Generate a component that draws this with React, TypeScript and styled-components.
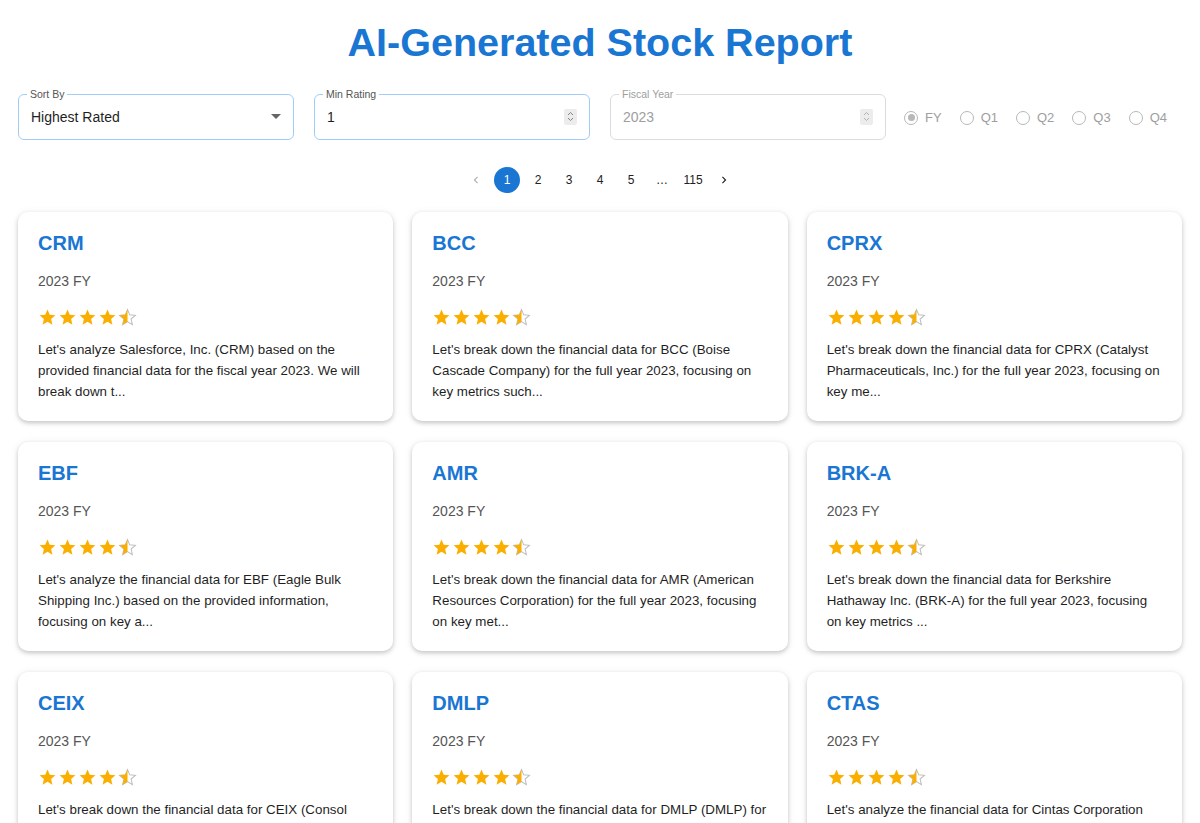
import React from 'react'
import styled, { createGlobalStyle } from 'styled-components'

const GlobalStyle = createGlobalStyle`
    body {
        margin: 0;
        background: #fff;
        font-family: 'Liberation Sans', Arial, sans-serif;
        color: #1f1f1f;
    }
`

const Page = styled.div`
    padding: 20px 18px 40px;
`

const Title = styled.h1`
    margin: 0 0 31px;
    text-align: center;
    font-size: 39.5px;
    line-height: 44px;
    font-weight: 700;
    color: #1976d2;
`

const Controls = styled.div`
    display: flex;
    align-items: center;
    gap: 20px;
`

const Field = styled.fieldset<{ disabled?: boolean }>`
    position: relative;
    box-sizing: border-box;
    width: 276px;
    height: 51px;
    margin: -6px 0 0;
    padding: 0 12px;
    border: 1px solid ${p => (p.disabled ? '#dcdcdc' : '#9fcdf5')};
    border-radius: 6px;
    display: flex;
    align-items: center;
    justify-content: space-between;
    font-size: 14px;
    color: ${p => (p.disabled ? '#9e9e9e' : '#1f1f1f')};
`

const Legend = styled.legend<{ disabled?: boolean }>`
    padding: 0 3px;
    margin-left: -4px;
    font-size: 10.5px;
    line-height: 11px;
    color: ${p => (p.disabled ? '#9e9e9e' : '#555')};
`

const FieldValue = styled.span`
    margin-top: -6px;
`

const Caret = styled.span`
    margin-top: -6px;
    width: 0;
    height: 0;
    border-left: 5px solid transparent;
    border-right: 5px solid transparent;
    border-top: 5px solid #666;
`

const Spinner = styled.span`
    margin-top: -6px;
    width: 13px;
    height: 16px;
    background: #ececec;
    border-radius: 2px;
    display: flex;
    align-items: center;
    justify-content: center;
`

const Radios = styled.div`
    display: flex;
    align-items: center;
    gap: 18px;
    margin-left: -2px;
    font-size: 13px;
    color: #9e9e9e;
`

const RadioItem = styled.label`
    display: flex;
    align-items: center;
    gap: 7px;
`

const RadioDot = styled.span<{ checked?: boolean }>`
    box-sizing: border-box;
    width: 14px;
    height: 14px;
    border-radius: 50%;
    border: 1px solid #b8b8b8;
    display: flex;
    align-items: center;
    justify-content: center;

    &::after {
        content: '';
        width: 7px;
        height: 7px;
        border-radius: 50%;
        background: ${p => (p.checked ? '#b8b8b8' : 'transparent')};
    }
`

const Pager = styled.nav`
    margin: 27px 0 19px;
    display: flex;
    justify-content: center;
    align-items: center;
    gap: 5px;
    font-size: 12px;
    color: #222;
`

const PageBtn = styled.span<{ active?: boolean; muted?: boolean }>`
    min-width: 26px;
    height: 26px;
    border-radius: 13px;
    display: flex;
    align-items: center;
    justify-content: center;
    background: ${p => (p.active ? '#1976d2' : 'transparent')};
    color: ${p => (p.active ? '#fff' : p.muted ? '#b0b0b0' : '#222')};
`

const Grid = styled.div`
    display: grid;
    grid-template-columns: repeat(3, 1fr);
    column-gap: 19px;
    row-gap: 21px;
`

const Card = styled.div`
    box-sizing: border-box;
    height: 209px;
    padding: 19px 18px 0 20px;
    background: #fff;
    border-radius: 10px;
    box-shadow: 0 2px 4px rgba(0, 0, 0, 0.18), 0 1px 8px rgba(0, 0, 0, 0.08);
`

const Ticker = styled.h2`
    margin: 0;
    font-size: 20px;
    line-height: 24px;
    font-weight: 700;
    color: #1976d2;
`

const Period = styled.div`
    margin-top: 18px;
    font-size: 14px;
    line-height: 16px;
    color: #555;
`

const Stars = styled.div`
    margin-top: 19px;
    display: flex;
    gap: 1px;
`

const Summary = styled.p`
    margin: 12px 0 0;
    font-size: 13.35px;
    line-height: 21px;
    color: #1f1f1f;
`

const STAR = 'M12 17.27 18.18 21l-1.64-7.03L22 9.24l-7.19-.61L12 2 9.19 8.63 2 9.24l5.46 4.73L5.82 21z'

const Star = ({ fill }: { fill: 'full' | 'half' | 'empty' }) => (
    <svg width="19" height="19" viewBox="0 0 24 24">
        <defs>
            <clipPath id="half-left">
                <rect x="0" y="0" width="12" height="24" />
            </clipPath>
        </defs>
        {fill !== 'full' && <path d={STAR} fill="none" stroke="#bdbdbd" strokeWidth="1.3" />}
        {fill === 'full' && <path d={STAR} fill="#faaf00" />}
        {fill === 'half' && <path d={STAR} fill="#faaf00" clipPath="url(#half-left)" />}
    </svg>
)

const Rating = ({ value }: { value: number }) => (
    <Stars>
        {[1, 2, 3, 4, 5].map(i => (
            <Star key={i} fill={value >= i ? 'full' : value >= i - 0.5 ? 'half' : 'empty'} />
        ))}
    </Stars>
)

const reports = [
    { ticker: 'CRM', text: "Let's analyze Salesforce, Inc. (CRM) based on the provided financial data for the fiscal year 2023. We will break down t..." },
    { ticker: 'BCC', text: "Let's break down the financial data for BCC (Boise Cascade Company) for the full year 2023, focusing on key metrics such..." },
    { ticker: 'CPRX', text: "Let's break down the financial data for CPRX (Catalyst Pharmaceuticals, Inc.) for the full year 2023, focusing on key me..." },
    { ticker: 'EBF', text: "Let's analyze the financial data for EBF (Eagle Bulk Shipping Inc.) based on the provided information, focusing on key a..." },
    { ticker: 'AMR', text: "Let's break down the financial data for AMR (American Resources Corporation) for the full year 2023, focusing on key met..." },
    { ticker: 'BRK-A', text: "Let's break down the financial data for Berkshire Hathaway Inc. (BRK-A) for the full year 2023, focusing on key metrics ..." },
    { ticker: 'CEIX', text: "Let's break down the financial data for CEIX (Consol Energy Inc.) for the full year 2023, focusing on key metri..." },
    { ticker: 'DMLP', text: "Let's break down the financial data for DMLP (DMLP) for the full year 2023, focusing on key metrics such as rev..." },
    { ticker: 'CTAS', text: "Let's analyze the financial data for Cintas Corporation (CTAS) for the fiscal year 2023, focusing on key metr..." },
]

const Chevron = ({ dir, color }: { dir: 'left' | 'right'; color: string }) => (
    <svg width="14" height="14" viewBox="0 0 24 24">
        <path
            d={dir === 'left' ? 'M15.41 7.41 14 6l-6 6 6 6 1.41-1.41L10.83 12z' : 'M10 6 8.59 7.41 13.17 12l-4.58 4.59L10 18l6-6z'}
            fill={color}
        />
    </svg>
)

export default function App() {
    return (
        <Page>
            <GlobalStyle />
            <Title>AI-Generated Stock Report</Title>

            <Controls>
                <Field>
                    <Legend>Sort By</Legend>
                    <FieldValue>Highest Rated</FieldValue>
                    <Caret />
                </Field>
                <Field>
                    <Legend>Min Rating</Legend>
                    <FieldValue>1</FieldValue>
                    <Spinner>
                        <svg width="7" height="11" viewBox="0 0 7 11">
                            <path d="M1 4 3.5 1.5 6 4M1 7l2.5 2.5L6 7" fill="none" stroke="#777" strokeWidth="0.9" />
                        </svg>
                    </Spinner>
                </Field>
                <Field disabled>
                    <Legend disabled>Fiscal Year</Legend>
                    <FieldValue>2023</FieldValue>
                    <Spinner>
                        <svg width="7" height="11" viewBox="0 0 7 11">
                            <path d="M1 4 3.5 1.5 6 4M1 7l2.5 2.5L6 7" fill="none" stroke="#aaa" strokeWidth="0.9" />
                        </svg>
                    </Spinner>
                </Field>
                <Radios>
                    {['FY', 'Q1', 'Q2', 'Q3', 'Q4'].map(q => (
                        <RadioItem key={q}>
                            <RadioDot checked={q === 'FY'} />
                            {q}
                        </RadioItem>
                    ))}
                </Radios>
            </Controls>

            <Pager>
                <PageBtn muted>
                    <Chevron dir="left" color="#b0b0b0" />
                </PageBtn>
                <PageBtn active>1</PageBtn>
                <PageBtn>2</PageBtn>
                <PageBtn>3</PageBtn>
                <PageBtn>4</PageBtn>
                <PageBtn>5</PageBtn>
                <PageBtn>…</PageBtn>
                <PageBtn>115</PageBtn>
                <PageBtn>
                    <Chevron dir="right" color="#222" />
                </PageBtn>
            </Pager>

            <Grid>
                {reports.map(r => (
                    <Card key={r.ticker}>
                        <Ticker>{r.ticker}</Ticker>
                        <Period>2023 FY</Period>
                        <Rating value={4.5} />
                        <Summary>{r.text}</Summary>
                    </Card>
                ))}
            </Grid>
        </Page>
    )
}
